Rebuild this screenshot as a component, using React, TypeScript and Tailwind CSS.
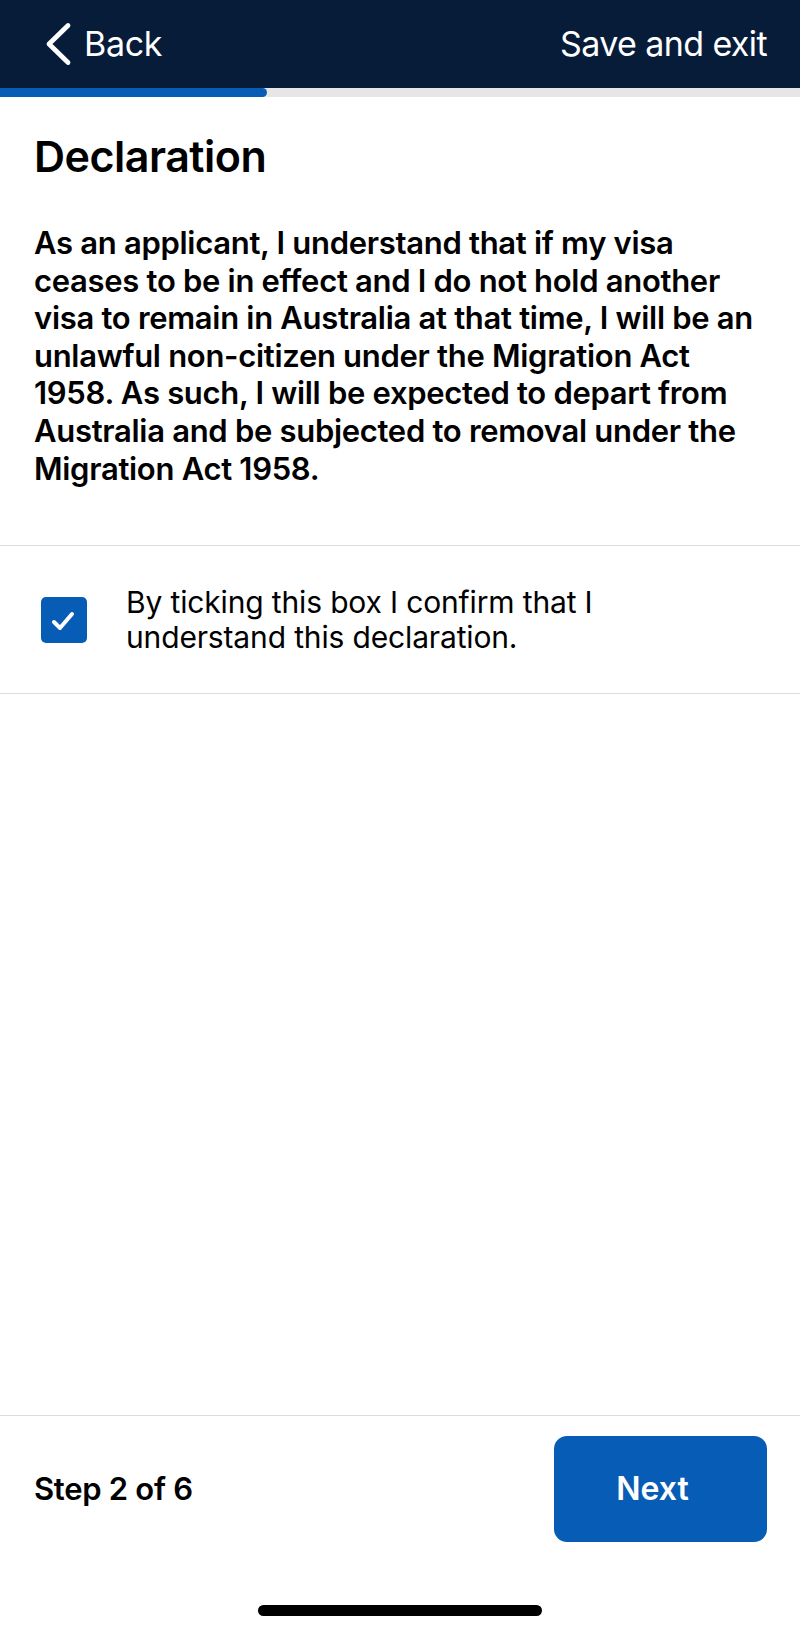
import React, { useState } from 'react';

const App: React.FC = () => {
  const [checked, setChecked] = useState(true);

  return (
    <div className="min-h-[1634px] w-[800px] flex flex-col bg-white text-black font-['Inter',sans-serif]">
      {/* Top bar */}
      <header className="h-[88px] bg-[#071c39] flex items-center justify-between pl-[42px] pr-[33px] text-white">
        <button className="flex items-center gap-[10px]">
          <svg width="32" height="44" viewBox="0 0 32 44" fill="none">
            <path d="M26 3.5 L7 22 L26 40.5" stroke="white" strokeWidth="4.8" strokeLinecap="round" strokeLinejoin="round" />
          </svg>
          <span className="text-[34px] leading-none tracking-[-0.3px]">Back</span>
        </button>
        <button className="text-[34px] leading-none tracking-[-0.6px]">Save and exit</button>
      </header>

      {/* Progress */}
      <div className="h-[9px] bg-[#e6e6e6]">
        <div className="h-full w-[267px] bg-[#075cb6] rounded-r-full" />
      </div>

      {/* Content */}
      <main className="px-[34px] pt-[35px]">
        <h1 className="text-[43px] leading-[48px] font-semibold tracking-[-0.5px]">Declaration</h1>
        <p className="mt-[44px] text-[31px] leading-[37.6px] font-semibold tracking-[-0.3px]">
          As an applicant, I understand that if my visa ceases to be in effect and I do not hold another visa to remain in Australia at that time, I will be an unlawful non-citizen under the Migration Act 1958. As such, I will be expected to depart from Australia and be subjected to removal under the Migration Act 1958.
        </p>
      </main>

      <div className="mt-[58px] border-t border-b border-[#dcdcdc] h-[149px] flex items-center pl-[41px] pr-[34px]">
        <button
          onClick={() => setChecked(!checked)}
          className={`w-[46px] h-[46px] rounded-[5px] flex items-center justify-center shrink-0 ${checked ? 'bg-[#075cb6]' : 'border-2 border-[#075cb6] bg-white'}`}
        >
          {checked && (
            <svg width="26" height="22" viewBox="0 0 26 22" fill="none" className="mt-[2px] -ml-[2px]">
              <path d="M4 12 L10 18 L22 4" stroke="white" strokeWidth="4" strokeLinecap="round" strokeLinejoin="round" />
            </svg>
          )}
        </button>
        <span className="ml-[39px] text-[30px] leading-[35px] w-[500px] tracking-[-0.15px]">
          By ticking this box I confirm that I understand this declaration.
        </span>
      </div>

      <div className="flex-1" />

      {/* Footer */}
      <footer className="border-t border-[#dcdcdc] pt-[20px] pl-[34px] pr-[33px] flex items-center justify-between">
        <span className="text-[31px] font-semibold tracking-[-0.3px]">Step 2 of 6</span>
        <button className="w-[213px] h-[106px] rounded-[13px] bg-[#075cb6] text-white text-[32px] font-semibold pr-[16px]">
          Next
        </button>
      </footer>
      <div className="h-[92px] flex items-start justify-center pt-[63px]">
        <div className="w-[284px] h-[11px] rounded-full bg-black" />
      </div>
    </div>
  );
};

export default App;
